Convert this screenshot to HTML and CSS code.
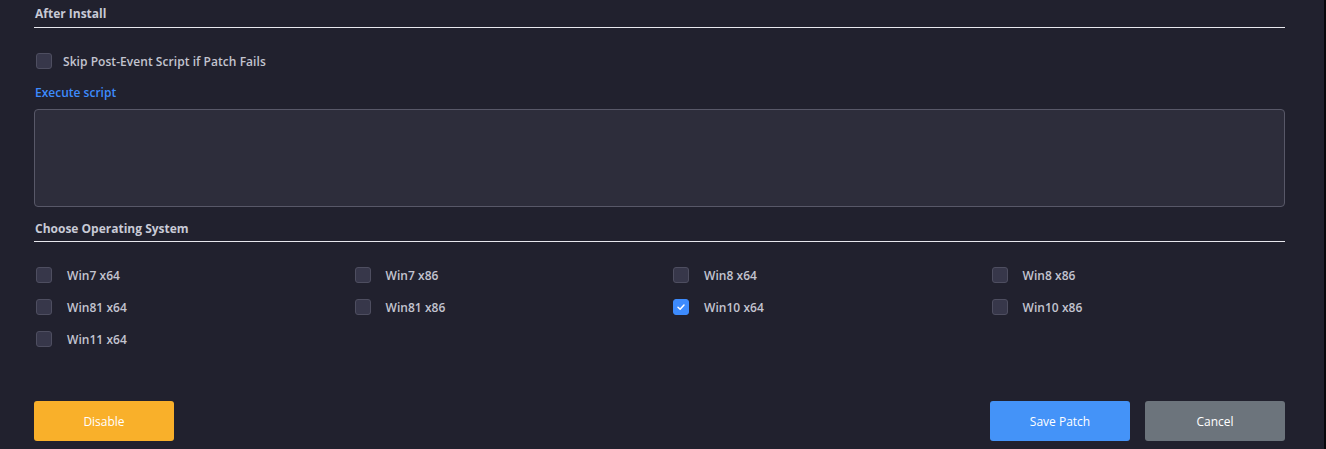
FILE: index.html
```html
<!DOCTYPE html>
<html lang="en">
<head>
  <meta charset="UTF-8">
  <title>Patch Settings</title>
  <link rel="stylesheet" href="styles.css">
</head>
<body>

<div class="panel">
  <h4 class="section-title">After Install</h4>

  <label class="check skip">
    <span class="box"></span>
    <span class="text">Skip Post-Event Script if Patch Fails</span>
  </label>

  <div class="field-label">Execute script</div>
  <textarea class="script-box"></textarea>

  <h4 class="section-title">Choose Operating System</h4>

  <div class="os-grid">
    <label class="check"><span class="box"></span><span class="text">Win7 x64</span></label>
    <label class="check"><span class="box"></span><span class="text">Win7 x86</span></label>
    <label class="check"><span class="box"></span><span class="text">Win8 x64</span></label>
    <label class="check"><span class="box"></span><span class="text">Win8 x86</span></label>
    <label class="check"><span class="box"></span><span class="text">Win81 x64</span></label>
    <label class="check"><span class="box"></span><span class="text">Win81 x86</span></label>
    <label class="check"><span class="box checked">
      <svg width="10" height="10" viewBox="0 0 10 10"><path d="M2 5.3 L4.1 7.2 L8 3" fill="none" stroke="#fff" stroke-width="1.5" stroke-linecap="round" stroke-linejoin="round"/></svg>
    </span><span class="text">Win10 x64</span></label>
    <label class="check"><span class="box"></span><span class="text">Win10 x86</span></label>
    <label class="check"><span class="box"></span><span class="text">Win11 x64</span></label>
  </div>

  <div class="actions">
    <button class="btn btn-warning">Disable</button>
    <div class="right">
      <button class="btn btn-primary">Save Patch</button>
      <button class="btn btn-secondary">Cancel</button>
    </div>
  </div>
</div>

<div class="edge"></div>

</body>
</html>
```

FILE: styles.css
```css
html, body {
  margin: 0;
  height: 100%;
}

body {
  background: #21212e;
  font-family: "Open Sans", Arial, sans-serif;
  font-size: 12px;
  color: #c3c4d0;
  overflow: hidden;
}

.panel {
  width: 1251px;
  margin-left: 34px;
  display: flex;
  flex-direction: column;
}

.section-title {
  margin: 0;
  padding: 5px 0 4px 1px;
  line-height: 18px;
  font-size: 12px;
  font-weight: 700;
  color: #c8cad6;
  border-bottom: 1px solid #e8e8ee;
}

.check {
  display: flex;
  align-items: center;
  height: 16px;
  font-weight: 600;
  color: #c3c4d0;
}

.check .box {
  width: 14px;
  height: 14px;
  margin-left: 2px;
  border: 1px solid #4e4e60;
  border-radius: 3px;
  background: #37374a;
  display: flex;
  align-items: center;
  justify-content: center;
}

.check .box.checked {
  background: #3d8bfd;
  border-color: #3d8bfd;
}

.check .text {
  margin-left: 15px;
  letter-spacing: 0.05px;
}

.skip {
  margin-top: 25px;
}

.skip .text {
  margin-left: 11px;
}

.field-label {
  margin-top: 15px;
  line-height: 18px;
  padding-left: 1px;
  font-weight: 600;
  color: #3d8bfd;
}

.script-box {
  margin-top: 7px;
  height: 98px;
  box-sizing: border-box;
  background: #2d2d3b;
  border: 1px solid #585868;
  border-radius: 4px;
  resize: none;
  color: #c3c4d0;
  font-family: inherit;
}

.script-box + .section-title {
  margin-top: 11px;
  padding-top: 2px;
  padding-bottom: 3px;
}

.os-grid {
  display: grid;
  grid-template-columns: repeat(4, 1fr);
  column-gap: 23px;
  row-gap: 16px;
  margin-top: 25px;
}

.actions {
  display: flex;
  justify-content: space-between;
  margin-top: 54px;
}

.actions .right {
  display: flex;
  gap: 15px;
}

.btn {
  width: 140px;
  height: 40px;
  border: none;
  border-radius: 3px;
  color: #fff;
  font-family: inherit;
  font-size: 12px;
  cursor: pointer;
}

.btn-warning {
  background: #f9b02a;
}

.btn-primary {
  background: #4493f8;
}

.btn-secondary {
  background: #6c747c;
}

.edge {
  position: fixed;
  top: 0;
  right: 0;
  width: 2px;
  height: 100%;
  background: #08080c;
}
```
